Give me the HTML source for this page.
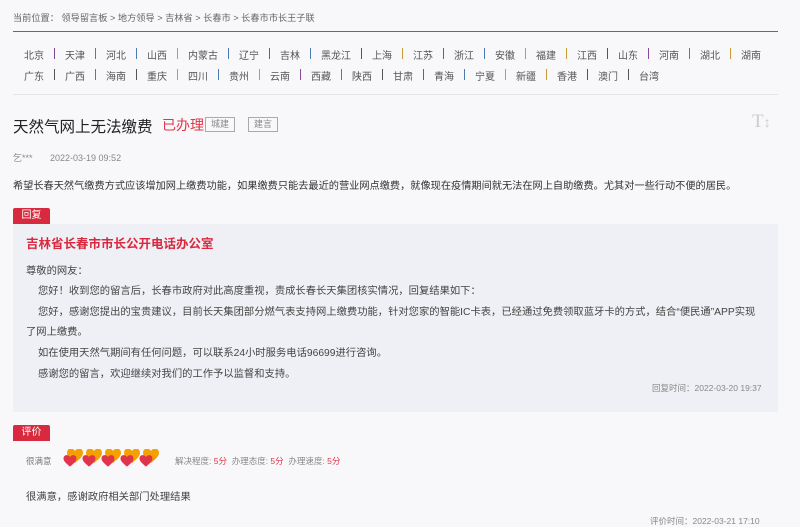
<!DOCTYPE html>
<html><head><meta charset="utf-8"><style>
*{margin:0;padding:0;box-sizing:border-box}
body{width:800px;height:525px;overflow:hidden;background:#f8f7f9;font-family:"Liberation Sans","Noto Sans CJK SC",sans-serif;color:#333;position:relative}
.a{position:absolute;white-space:nowrap}
.crumb{left:13px;top:10px;font-size:9.2px;color:#666}
.redline{left:13px;top:31px;width:765px;height:1px;background:#e0344a}
.row{left:14px;font-size:10px;color:#555;display:flex}
.row span{display:inline-block;padding:0 10px}
.row i{font-style:normal;display:inline-block;width:1px;height:11px;margin-top:1px}
.grey{left:13px;top:94px;width:765px;height:1px;background:#e6e4e8}
.title{left:13px;top:115px;font-size:15.5px;color:#222}
.done{left:162px;top:115px;font-size:14px;color:#e0344a}
.tag{top:117px;height:15px;border:1px solid #aaa;font-size:9px;color:#888;padding:0 5px;line-height:13px}
.meta{left:13px;top:151px;font-size:9px;color:#888}
.body{left:13px;top:177px;font-size:10.2px;color:#333}
.lbl{left:13px;width:37px;height:16px;background:#d9293e;color:#fff;font-size:10px;line-height:16px;text-align:center;border-radius:2px 2px 0 0}
.box{left:13px;top:224px;width:765px;height:188px;background:#eff0f5}
.off{left:26px;top:233px;font-size:12.5px;font-weight:bold;color:#d9293e}
.t{font-size:10.3px;color:#444;left:26px}
.small{font-size:8.5px;color:#888}
.r{color:#e0344a}
</style></head><body>
<div class="a crumb">当前位置： 领导留言板 &gt; 地方领导 &gt; 吉林省 &gt; 长春市 &gt; 长春市市长王子联</div>
<div class="a redline"></div>
<div class="a row" style="top:47px"><span>北京</span><i style="background:#7a4a8a"></i><span>天津</span><i style="background:#4a7ab0"></i><span>河北</span><i style="background:#4a7ab0"></i><span>山西</span><i style="background:#c99a3a"></i><span>内蒙古</span><i style="background:#4a7ab0"></i><span>辽宁</span><i style="background:#8a4a9a"></i><span>吉林</span><i style="background:#4a7ab0"></i><span>黑龙江</span><i style="background:#555"></i><span>上海</span><i style="background:#c99a3a"></i><span>江苏</span><i style="background:#8a4a9a"></i><span>浙江</span><i style="background:#4a7ab0"></i><span>安徽</span><i style="background:#c99a3a"></i><span>福建</span><i style="background:#c99a3a"></i><span>江西</span><i style="background:#555"></i><span>山东</span><i style="background:#8a4a9a"></i><span>河南</span><i style="background:#4a7ab0"></i><span>湖北</span><i style="background:#c99a3a"></i><span>湖南</span></div>
<div class="a row" style="top:68px"><span>广东</span><i style="background:#555"></i><span>广西</span><i style="background:#4a7ab0"></i><span>海南</span><i style="background:#555"></i><span>重庆</span><i style="background:#c99a3a"></i><span>四川</span><i style="background:#4a7ab0"></i><span>贵州</span><i style="background:#c99a3a"></i><span>云南</span><i style="background:#8a4a9a"></i><span>西藏</span><i style="background:#4a7ab0"></i><span>陕西</span><i style="background:#555"></i><span>甘肃</span><i style="background:#8a4a9a"></i><span>青海</span><i style="background:#4a7ab0"></i><span>宁夏</span><i style="background:#c99a3a"></i><span>新疆</span><i style="background:#c99a3a"></i><span>香港</span><i style="background:#555"></i><span>澳门</span><i style="background:#555"></i><span>台湾</span></div>
<div class="a grey"></div>
<div class="a title">天然气网上无法缴费</div>
<div class="a done">已办理</div>
<div class="a tag" style="left:205px">城建</div>
<div class="a tag" style="left:248px">建言</div>
<div class="a" style="left:752px;top:111px;font-family:'Liberation Serif',serif;font-size:19px;color:#ccc">T<span style="font-size:14px">↕</span></div>
<div class="a meta">乞***&nbsp;&nbsp;&nbsp;&nbsp;&nbsp;&nbsp;&nbsp;2022-03-19 09:52</div>
<div class="a body">希望长春天然气缴费方式应该增加网上缴费功能，如果缴费只能去最近的营业网点缴费，就像现在疫情期间就无法在网上自助缴费。尤其对一些行动不便的居民。</div>
<div class="a lbl" style="top:208px">回复</div>
<div class="a box"></div>
<div class="a off">吉林省长春市市长公开电话办公室</div>
<div class="a t" style="top:262px">尊敬的网友：</div>
<div class="a t" style="top:282px;left:38px">您好！收到您的留言后，长春市政府对此高度重视，责成长春长天集团核实情况，回复结果如下：</div>
<div class="a t" style="top:303px;left:38px">您好，感谢您提出的宝贵建议，目前长天集团部分燃气表支持网上缴费功能，针对您家的智能IC卡表，已经通过免费领取蓝牙卡的方式，结合“便民通”APP实现</div>
<div class="a t" style="top:323px">了网上缴费。</div>
<div class="a t" style="top:344px;left:38px">如在使用天然气期间有任何问题，可以联系24小时服务电话96699进行咨询。</div>
<div class="a t" style="top:365px;left:38px">感谢您的留言，欢迎继续对我们的工作予以监督和支持。</div>
<div class="a small" style="left:652px;top:382px">回复时间：2022-03-20 19:37</div>
<div class="a lbl" style="top:425px">评价</div>
<div class="a small" style="left:26px;top:455px;color:#777">很满意</div>
<div class="a" style="left:62px;top:449px">
<svg width="100" height="20" viewBox="0 0 100 20">
<g id="h"><path d="M10 4c2-3.5 8-3.5 8 2 0 3.5-4.5 7-8 10-3.5-3-8-6.5-8-10 0-5.5 6-5.5 8-2z" fill="#f5a000" transform="translate(3,-2)"/><path d="M8 7c1.6-2.8 6.5-2.8 6.5 1.6 0 2.8-3.7 5.6-6.5 8-2.8-2.4-6.5-5.2-6.5-8 0-4.4 4.9-4.4 6.5-1.6z" fill="#e0344a" transform="translate(0,1)"/></g>
<use href="#h" x="19"/><use href="#h" x="38"/><use href="#h" x="57"/><use href="#h" x="76"/>
</svg></div>
<div class="a small" style="left:175px;top:455px">解决程度: <span class="r">5分</span>&nbsp;&nbsp;办理态度: <span class="r">5分</span>&nbsp;&nbsp;办理速度: <span class="r">5分</span></div>
<div class="a t" style="top:488px">很满意，感谢政府相关部门处理结果</div>
<div class="a small" style="left:650px;top:515px">评价时间：2022-03-21 17:10</div>
</body></html>
